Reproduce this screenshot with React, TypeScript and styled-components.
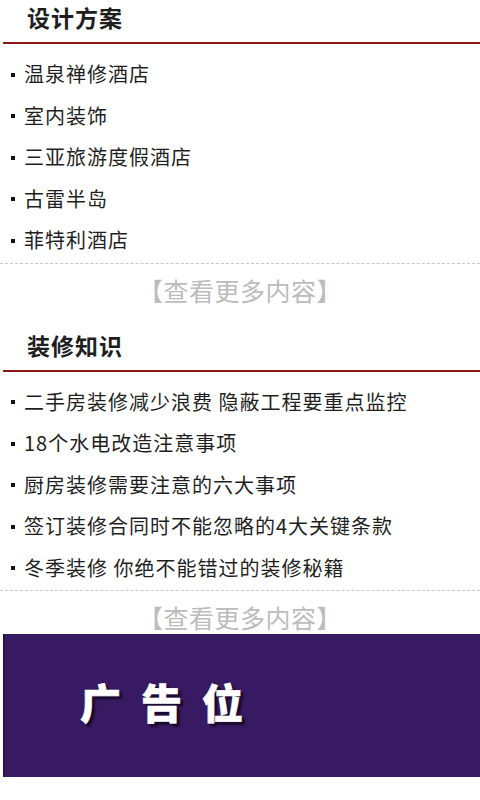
import styled, { createGlobalStyle } from "styled-components";

const GlobalStyle = createGlobalStyle`
  html, body {
    margin: 0;
    padding: 0;
    background: #fff;
    font-family: "Noto Sans CJK SC", "Noto Sans", sans-serif;
  }
`;

const Page = styled.div`
  width: 480px;
  overflow: hidden;
`;

const Section = styled.section<{ $first?: boolean }>`
  margin-top: ${(p) => (p.$first ? "0" : "21px")};
`;

const Header = styled.header`
  margin-left: 3px;
  border-bottom: 2px solid #8c1717;
  box-sizing: border-box;
  height: 44px;
`;

const Title = styled.h2`
  margin: 0;
  padding-left: 24px;
  font-size: 23px;
  font-weight: 700;
  line-height: 34px;
  color: #1e1e1e;
  letter-spacing: 1px;
`;

const List = styled.ul`
  list-style: none;
  margin: 0;
  padding: 9px 0 2px;
  border-bottom: 1px dashed #c8c8c8;
`;

const Item = styled.li`
  display: flex;
  align-items: center;
  height: 41.5px;
  padding-left: 11px;
  font-size: 20px;
  letter-spacing: 1px;
  color: #1f1f1f;
  &::before {
    content: "";
    width: 4px;
    height: 4px;
    margin-right: 9px;
    margin-top: 2px;
    background: #111;
    flex-shrink: 0;
  }
`;

const More = styled.a`
  display: block;
  padding-top: 10px;
  height: 33px;
  line-height: 33px;
  text-align: center;
  font-size: 25px;
  letter-spacing: 0.5px;
  color: #bcbcbc;
  text-decoration: none;
`;

const Banner = styled.div`
  margin-left: 3px;
  height: 143px;
  background: #371a62;
  border-left: 2px solid #2a1250;
  display: flex;
  align-items: center;
  padding-left: 75px;
  box-sizing: border-box;
`;

const BannerText = styled.span`
  font-size: 41px;
  font-weight: 900;
  color: #fff;
  letter-spacing: 20px;
  text-shadow: 2px 2px 0 #1b0b33, 3px 3px 2px #12061f;
  margin-top: -10px;
  -webkit-text-stroke: 0.6px #fff;
`;

const sections = [
  {
    title: "设计方案",
    items: ["温泉禅修酒店", "室内装饰", "三亚旅游度假酒店", "古雷半岛", "菲特利酒店"],
  },
  {
    title: "装修知识",
    items: [
      "二手房装修减少浪费 隐蔽工程要重点监控",
      "18个水电改造注意事项",
      "厨房装修需要注意的六大事项",
      "签订装修合同时不能忽略的4大关键条款",
      "冬季装修 你绝不能错过的装修秘籍",
    ],
  },
];

export default function App() {
  return (
    <Page>
      <GlobalStyle />
      {sections.map((s, i) => (
        <Section key={s.title} $first={i === 0}>
          <Header>
            <Title>{s.title}</Title>
          </Header>
          <List>
            {s.items.map((t) => (
              <Item key={t}>{t}</Item>
            ))}
          </List>
          <More href="#">【查看更多内容】</More>
        </Section>
      ))}
      <Banner>
        <BannerText>广告位</BannerText>
      </Banner>
    </Page>
  );
}
